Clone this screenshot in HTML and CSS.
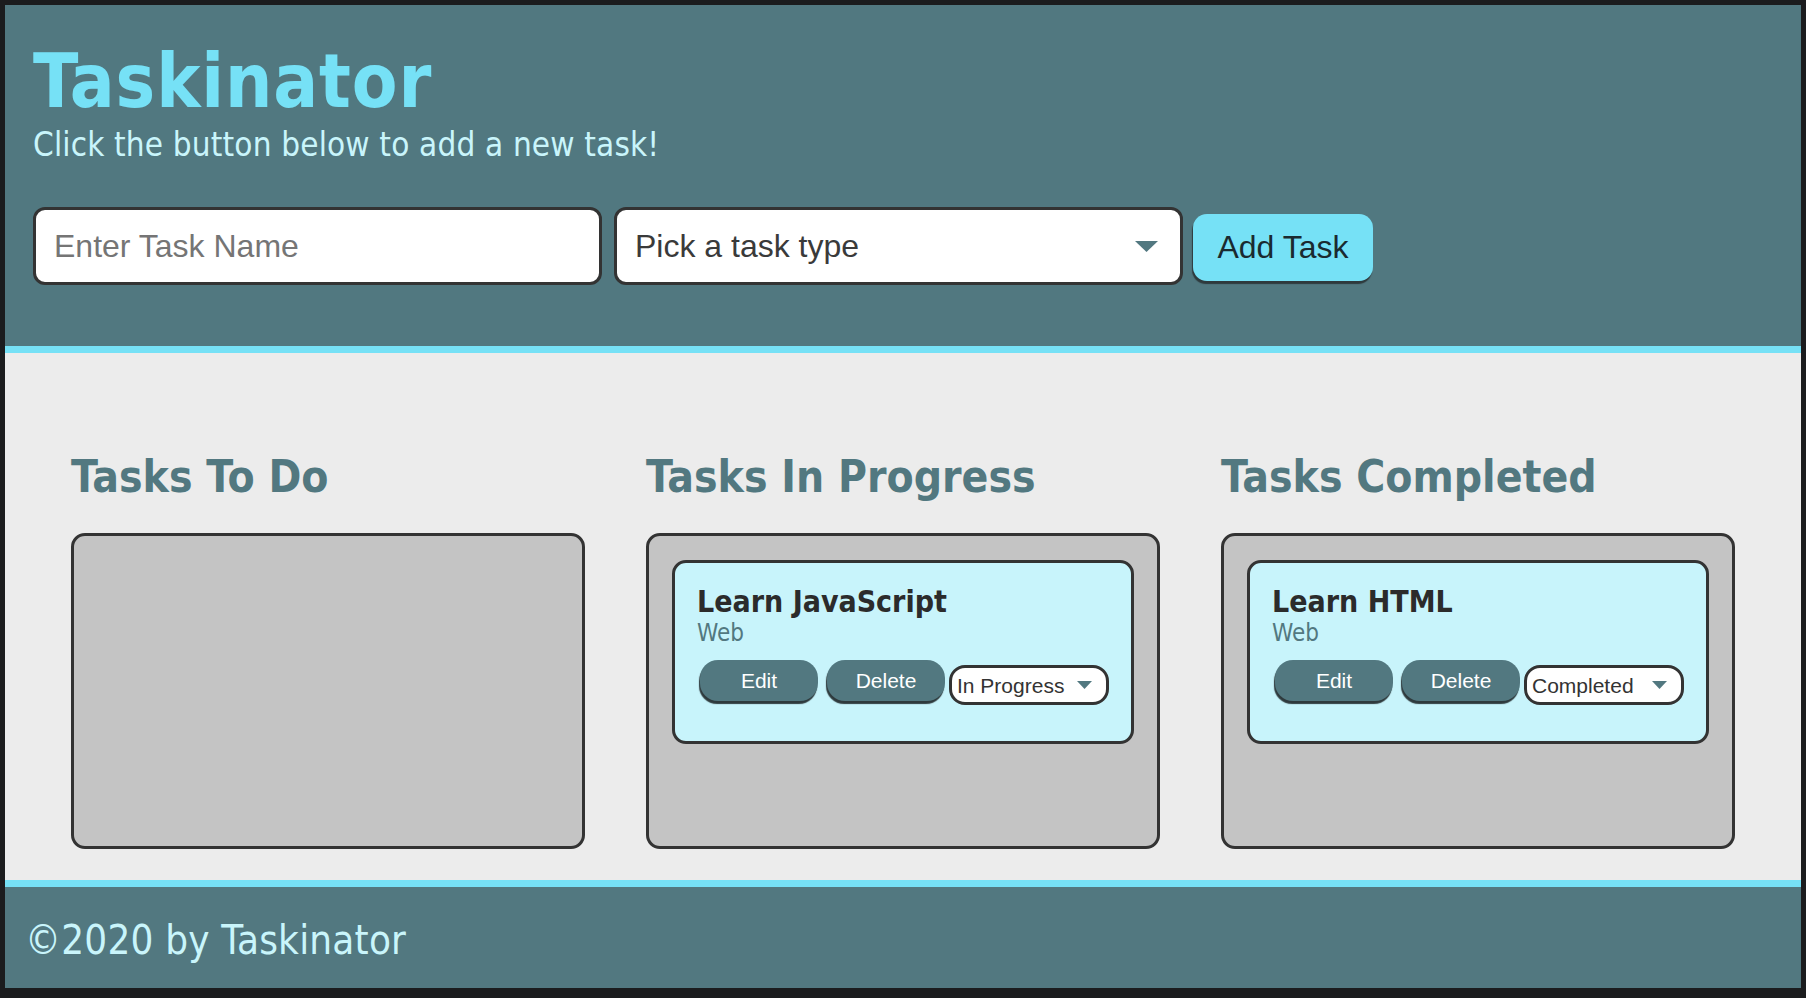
FILE: index.html
```html
<!DOCTYPE html>
<html lang="en">
<head>
<meta charset="utf-8">
<title>Taskinator</title>
<link rel="stylesheet" href="styles.css">
</head>
<body>
<header class="header">
  <h1 class="title">Taskinator</h1>
  <p class="subtitle">Click the button below to add a new task!</p>
  <form class="task-form">
    <input class="text-input" type="text" placeholder="Enter Task Name">
    <div class="select-wrap">
      <select class="type-select">
        <option>Pick a task type</option>
        <option>Web</option>
        <option>Mobile</option>
        <option>Print</option>
      </select>
      <svg class="select-arrow" width="23" height="11" viewBox="0 0 23 11"><polygon points="0,0 23,0 11.5,11" fill="#527880"/></svg>
    </div>
    <button class="btn-add" type="button">Add Task</button>
  </form>
</header>

<main class="board">
  <section class="column">
    <h2 class="column-title">Tasks To Do</h2>
    <ul class="task-list"></ul>
  </section>
  <section class="column">
    <h2 class="column-title">Tasks In Progress</h2>
    <ul class="task-list">
      <li class="task-card">
        <h3 class="task-name">Learn JavaScript</h3>
        <span class="task-type">Web</span>
        <div class="task-actions">
          <button class="btn btn-edit" type="button">Edit</button>
          <button class="btn btn-delete" type="button">Delete</button>
          <div class="status-wrap">
            <select class="status-select">
              <option>In Progress</option>
              <option>To Do</option>
              <option>Completed</option>
            </select>
            <svg class="status-arrow" width="15" height="8" viewBox="0 0 15 8"><polygon points="0,0 15,0 7.5,8" fill="#527880"/></svg>
          </div>
        </div>
      </li>
    </ul>
  </section>
  <section class="column">
    <h2 class="column-title">Tasks Completed</h2>
    <ul class="task-list">
      <li class="task-card">
        <h3 class="task-name">Learn HTML</h3>
        <span class="task-type">Web</span>
        <div class="task-actions">
          <button class="btn btn-edit" type="button">Edit</button>
          <button class="btn btn-delete" type="button">Delete</button>
          <div class="status-wrap">
            <select class="status-select">
              <option>Completed</option>
              <option>To Do</option>
              <option>In Progress</option>
            </select>
            <svg class="status-arrow" width="15" height="8" viewBox="0 0 15 8"><polygon points="0,0 15,0 7.5,8" fill="#527880"/></svg>
          </div>
        </div>
      </li>
    </ul>
  </section>
</main>

<footer class="footer">
  <p class="copyright">&copy;2020 by Taskinator</p>
</footer>
</body>
</html>
```

FILE: styles.css
```css
html {
  background: #1b1c1e;
}

body {
  margin: 5px 5px 10px;
  font-family: "DejaVu Sans Condensed", "DejaVu Sans", Verdana, sans-serif;
  font-stretch: condensed;
}

.header {
  background: #517880;
  padding: 33px 28px 61px;
  border-bottom: 7px solid #76e1f6;
}

.title {
  margin: 0;
  font-size: 74px;
  line-height: 86px;
  font-weight: bold;
  letter-spacing: 0.9px;
  color: #76e1f6;
}

.subtitle {
  margin: 2px 0 0;
  font-size: 33px;
  line-height: 38px;
  letter-spacing: 0.15px;
  color: #c9f5fb;
}

.task-form {
  margin-top: 43px;
  display: flex;
  align-items: center;
}

.text-input,
.type-select {
  box-sizing: border-box;
  width: 569px;
  height: 78px;
  border: 3px solid #333;
  border-radius: 12px;
  background: #fff;
  padding: 0 18px;
  font-family: "Liberation Sans", Arial, sans-serif;
  font-stretch: normal;
  font-size: 32px;
  color: #333;
  outline: none;
}

.text-input::placeholder {
  color: #757575;
}

.select-wrap {
  position: relative;
  margin-left: 12px;
}

.type-select {
  display: block;
  -webkit-appearance: none;
  appearance: none;
  color: #3a3a3a;
}

.select-arrow {
  position: absolute;
  right: 25px;
  top: 34px;
  pointer-events: none;
}

.btn-add {
  margin-left: 10px;
  margin-top: 2px;
  width: 180px;
  height: 67px;
  border: none;
  border-radius: 14px;
  background: #76e1f6;
  color: #1a2a30;
  font-family: "Liberation Sans", Arial, sans-serif;
  font-stretch: normal;
  font-size: 32px;
  box-shadow: -1px 3px 1px #2e3a3d;
  padding: 0;
}

.board {
  background: #ececec;
  padding: 99px 66px 31px;
  display: grid;
  grid-template-columns: repeat(3, 1fr);
  column-gap: 61px;
}

.column-title {
  margin: 0 0 31px;
  font-size: 44px;
  line-height: 50px;
  font-weight: bold;
  color: #527880;
}

.task-list {
  box-sizing: border-box;
  height: 316px;
  margin: 0;
  list-style: none;
  border: 3px solid #333;
  border-radius: 14px;
  background: #c4c4c4;
  padding: 24px 23px;
}

.task-card {
  border: 3px solid #333;
  border-radius: 14px;
  background: #c8f4fb;
  padding: 21px 22px 36px;
}

.task-name {
  margin: 0;
  font-size: 30px;
  line-height: 35px;
  font-weight: bold;
  color: #2b2b2b;
}

.task-type {
  display: block;
  font-size: 24px;
  line-height: 28px;
  color: #527880;
}

.task-actions {
  margin-top: 13px;
  display: flex;
  align-items: flex-start;
}

.btn {
  width: 118px;
  height: 41px;
  border: none;
  border-radius: 18px;
  background: #527880;
  color: #fff;
  font-family: "Liberation Sans", Arial, sans-serif;
  font-stretch: normal;
  font-size: 21px;
  box-shadow: -1px 3px 1px #2e3a3d;
  padding: 0;
}

.btn-edit {
  margin-left: 3px;
}

.btn-delete {
  margin-left: 9px;
}

.status-wrap {
  position: relative;
  margin-left: 4px;
  margin-top: 5px;
}

.status-select {
  display: block;
  box-sizing: border-box;
  width: 160px;
  height: 40px;
  border: 3px solid #333;
  border-radius: 16px;
  background: #fff;
  padding: 0 0 0 5px;
  -webkit-appearance: none;
  appearance: none;
  font-family: "Liberation Sans", Arial, sans-serif;
  font-stretch: normal;
  font-size: 21px;
  color: #333;
  outline: none;
}

.status-arrow {
  position: absolute;
  right: 17px;
  top: 16px;
  pointer-events: none;
}

.footer {
  background: #527880;
  border-top: 7px solid #76e1f6;
  padding: 30px 20px 24px;
}

.copyright {
  margin: 0;
  font-size: 40px;
  line-height: 47px;
  letter-spacing: 0.2px;
  color: #c9f5fb;
}
```
